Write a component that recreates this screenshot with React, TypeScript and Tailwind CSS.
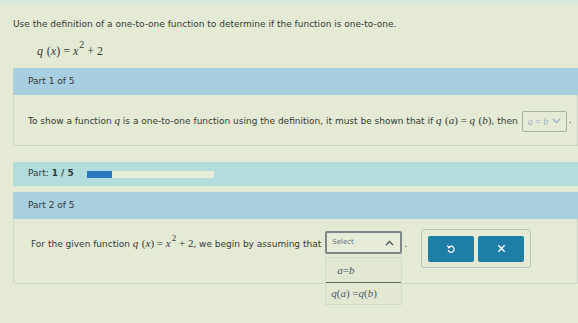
import React from 'react';

function M(props: { children: React.ReactNode; className?: string }) {
    return (
        <span className={'font-[family-name:Liberation_Serif,serif] ' + (props.className || '')}>{props.children}</span>
    );
}

function V(props: { children: React.ReactNode }) {
    return <i className="font-[family-name:Liberation_Serif,serif]">{props.children}</i>;
}

function Chevron(props: { up?: boolean; className?: string }) {
    return (
        <svg width="9" height="6" viewBox="0 0 9 6" className={props.className}>
            {props.up ? (
                <path d="M1 5 L4.5 1.5 L8 5" fill="none" stroke="currentColor" strokeWidth="1.4" />
            ) : (
                <path d="M1 1 L4.5 4.5 L8 1" fill="none" stroke="currentColor" strokeWidth="1.4" />
            )}
        </svg>
    );
}

export default function App() {
    return (
        <div className="w-[578px] h-[323px] overflow-hidden bg-[#e4ead4] text-[#353a37] font-[family-name:DejaVu_Sans,sans-serif] text-[9px]">
            <div className="h-[4px] bg-[#d8e6db]"></div>

            <p className="pl-[13px] pt-[15px] leading-[11px]">
                Use the definition of a one-to-one function to determine if the function is one-to-one.
            </p>

            <div className="pl-[37px] pt-[14px] h-[38px] text-[12px] leading-[14px]">
                <V>q</V> <M>(</M><V>x</V><M>) = </M><V>x</V><sup className="text-[10px] relative -top-[7px] ml-[1px]"><M>2</M></sup><M> + 2</M>
            </div>

            {/* part 1 */}
            <div className="ml-[13px] h-[27px] bg-[#a8cfdf] flex items-center pl-[15px] rounded-tl-[2px]">
                Part 1 of 5
            </div>
            <div className="ml-[13px] h-[51px] border border-t-0 border-[#cfd6c6] rounded-bl-[3px] flex items-center pl-[14px] pt-[2px]">
                <span>
                    To show a function <span className="text-[11px]"><V>q</V></span> is a one-to-one function using the definition, it must be shown that if{' '}
                    <span className="text-[11px]"><V>q</V> <M>(</M><V>a</V><M>) = </M><V>q</V> <M>(</M><V>b</V><M>)</M></span>, then
                </span>
                <div className="ml-[4px] w-[45px] h-[21px] border border-[#a9b1a7] rounded-[2px] flex items-center justify-between px-[5px] text-[#9fb4c4]">
                    <span className="text-[10px]"><V>a</V><M> = </M><V>b</V></span>
                    <Chevron className="text-[#9fb4c4]" />
                </div>
                <span className="ml-[2px]">.</span>
            </div>

            {/* progress */}
            <div className="ml-[13px] mt-[16px] h-[24px] bg-[#b3dddd] flex items-center pl-[15px]">
                <span>Part: <span className="font-semibold">1 / 5</span></span>
                <div className="ml-[13px] w-[127px] h-[7px] bg-[#e6eed8] flex">
                    <div className="w-[25px] h-full bg-[#2a78be]"></div>
                </div>
            </div>

            {/* part 2 */}
            <div className="ml-[13px] mt-[6px] h-[27px] bg-[#a9d0de] flex items-center pl-[15px]">
                Part 2 of 5
            </div>
            <div className="ml-[13px] h-[65px] border border-t-0 border-[#cfd6c6] rounded-bl-[3px] flex items-start pl-[17px] pt-[10px]">
                <span className="mt-[6px]">
                    For the given function{' '}
                    <span className="text-[11px]"><V>q</V> <M>(</M><V>x</V><M>) = </M><V>x</V><sup className="text-[9px] relative -top-[6px] ml-[1px]"><M>2</M></sup><M> + 2</M></span>, we begin by assuming that
                </span>
                <div className="relative ml-[4px] mt-[2px]">
                    <div className="w-[77px] h-[23px] border-2 border-[#7d8886] rounded-[2px] flex items-center justify-between pl-[5px] pr-[6px] bg-[#e7ecd9]">
                        <span className="text-[7px] text-[#67707a]">Select</span>
                        <Chevron up className="text-[#4b5558]" />
                    </div>
                    <div className="absolute left-0 top-[26px] w-[77px] h-[48px] bg-[#e2e8d2] border border-[#d4dacb] flex flex-col">
                        <div className="h-[25px] flex items-center pl-[11px] text-[11px] text-[#4d5a6c] border-b border-[#5d6765]">
                            <V>a</V><M> = </M><V>b</V>
                        </div>
                        <div className="flex-1 flex items-center pl-[5px] text-[11px] text-[#4d5a6c]">
                            <V>q</V><M>(</M><V>a</V><M>) = </M><V>q</V><M>(</M><V>b</V><M>)</M>
                        </div>
                    </div>
                </div>
                <span className="ml-[2px] mt-[9px]">.</span>
                <div className="ml-[14px] w-[110px] h-[39px] border border-[#b9c4c0] rounded-[3px] flex items-center justify-center gap-[4px]">
                    <button className="w-[46px] h-[26px] rounded-[2px] bg-[#1f7ea6] flex items-center justify-center text-white">
                        <svg width="10" height="10" viewBox="0 0 12 12">
                            <path d="M3.2 4.2 A3.6 3.6 0 1 1 2.6 7" fill="none" stroke="white" strokeWidth="1.5" />
                            <path d="M1.5 1.8 L3.6 4.6 L5.9 2.6" fill="none" stroke="white" strokeWidth="1.4" />
                        </svg>
                    </button>
                    <button className="w-[46px] h-[26px] rounded-[2px] bg-[#1f7ea6] flex items-center justify-center text-white">
                        <svg width="9" height="9" viewBox="0 0 10 10">
                            <path d="M1.5 1.5 L8.5 8.5 M8.5 1.5 L1.5 8.5" stroke="white" strokeWidth="1.5" />
                        </svg>
                    </button>
                </div>
            </div>
        </div>
    );
}
